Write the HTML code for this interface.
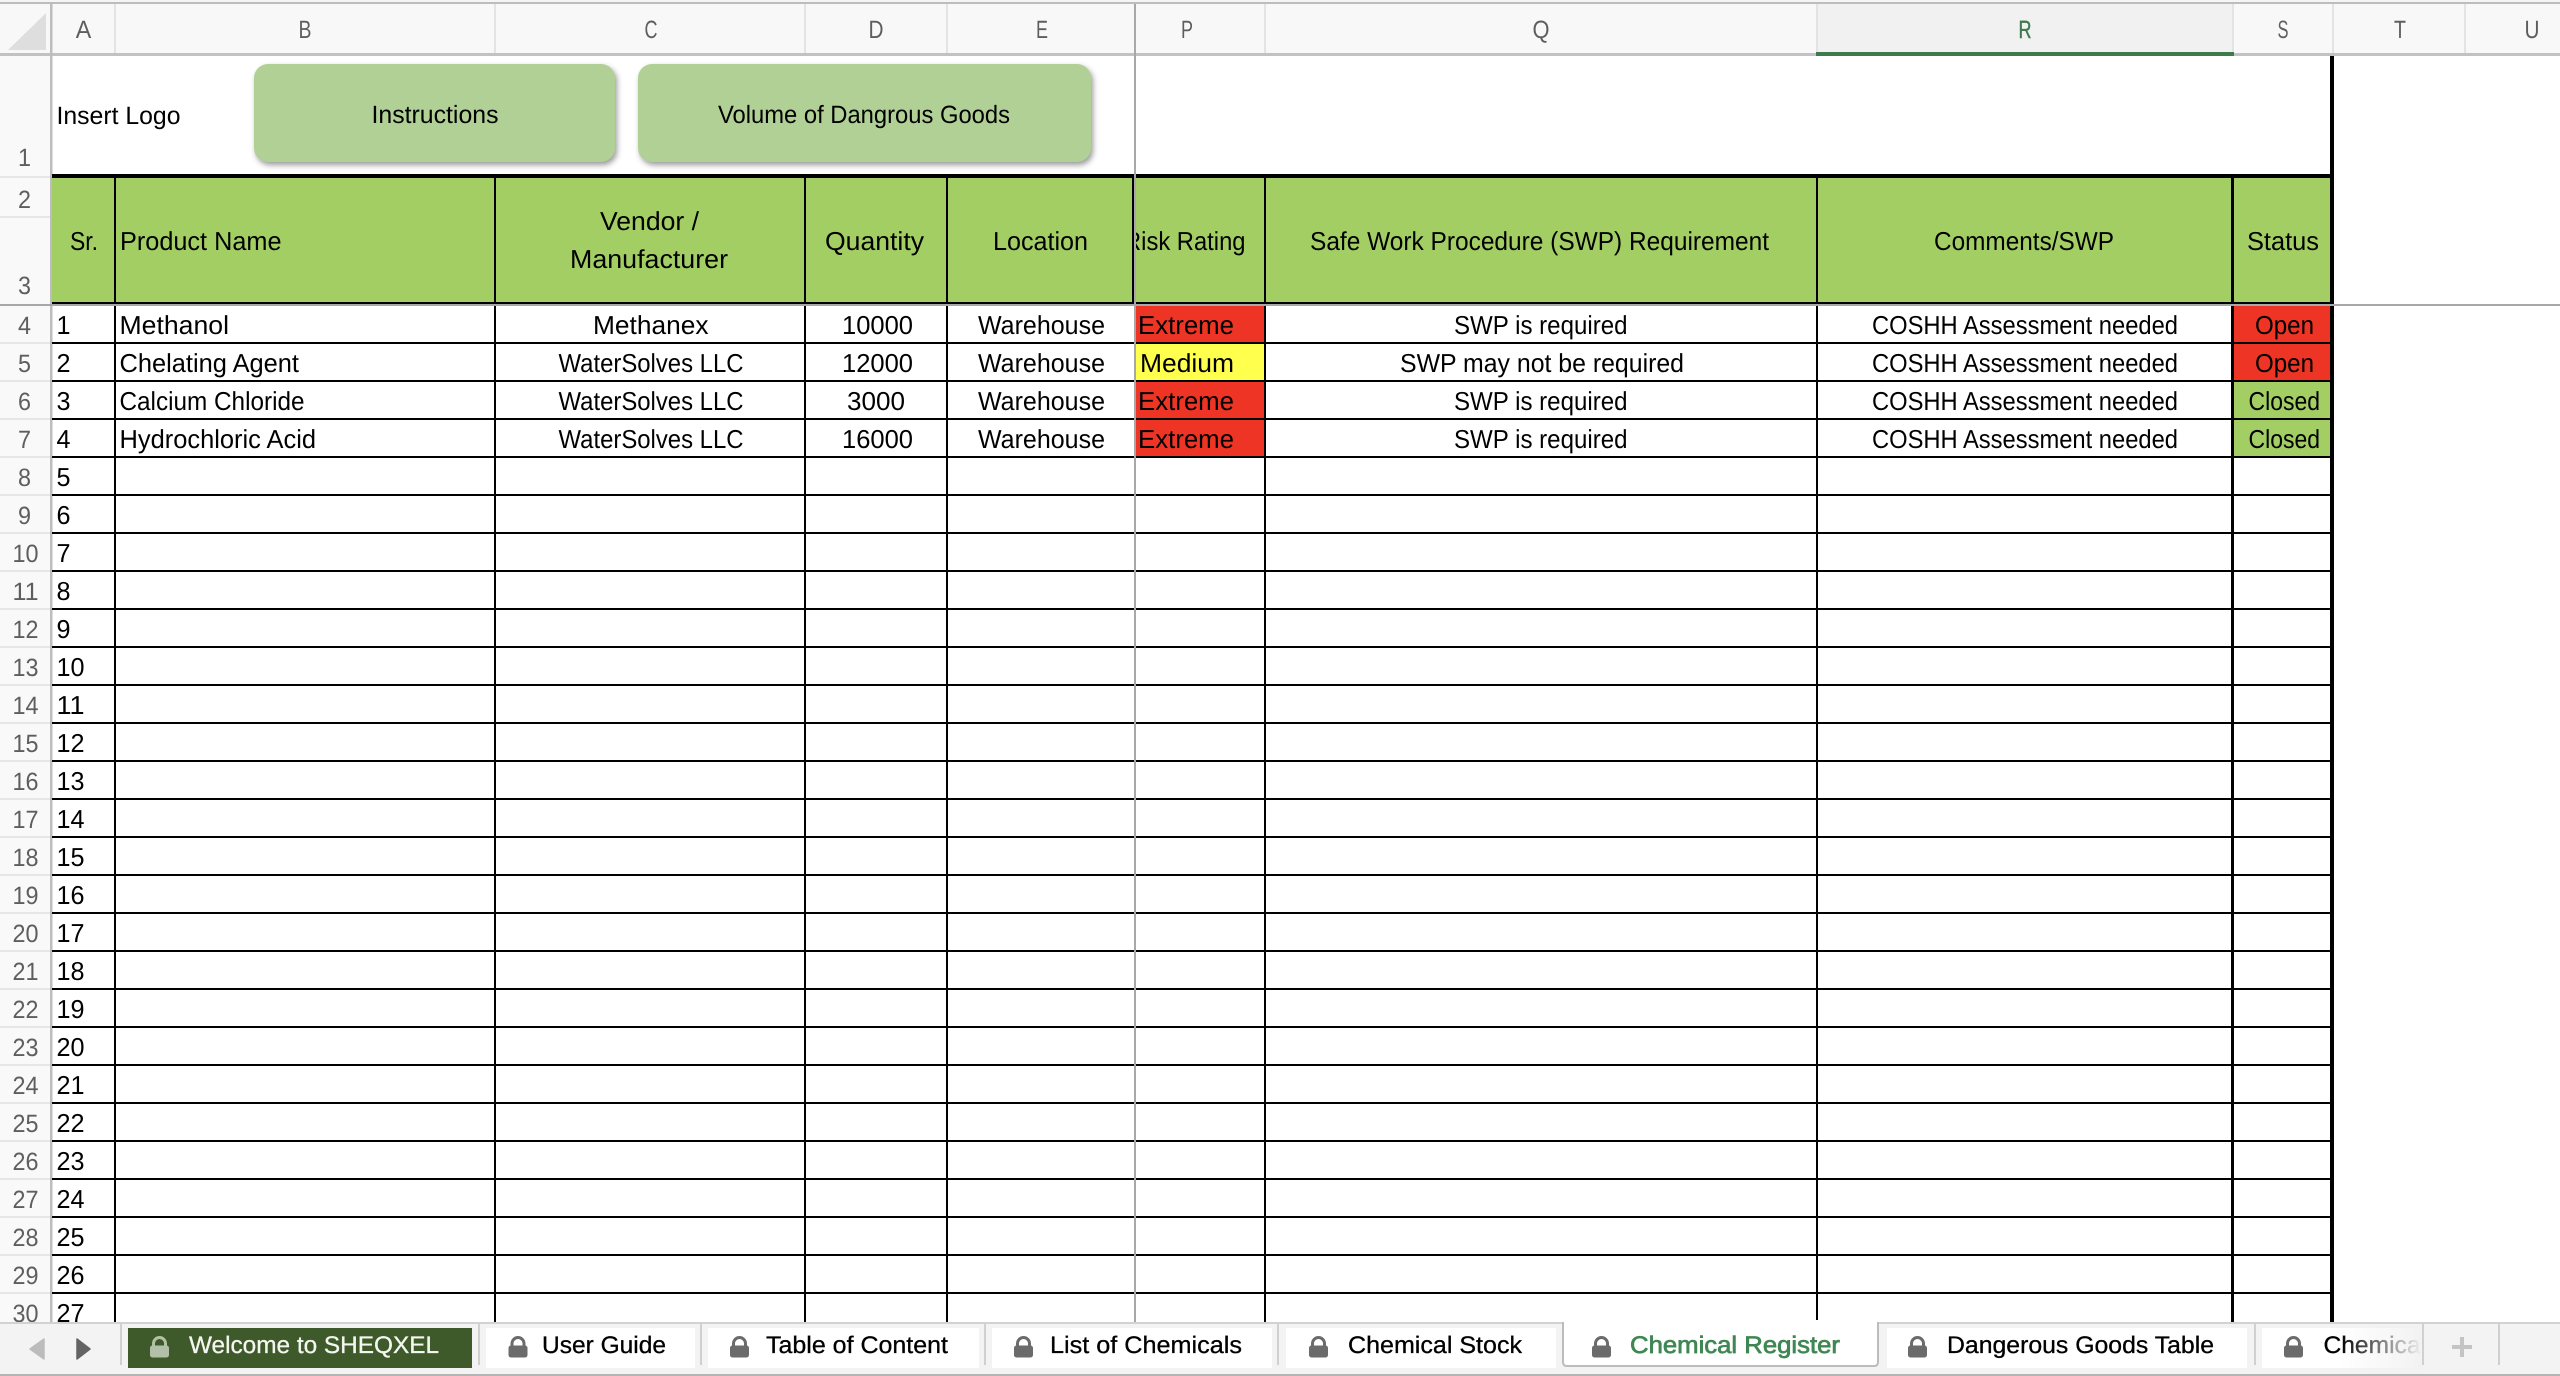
<!DOCTYPE html>
<html lang="en"><head><meta charset="utf-8"><title>Chemical Register</title>
<style>
html,body{margin:0;padding:0;background:#fff;width:2560px;height:1376px;overflow:hidden}
svg{display:block}
text{font-family:"Liberation Sans",sans-serif;text-rendering:geometricPrecision}
.c{font-size:26px;fill:#000}
.b{font-size:25px;fill:#000}
.h{font-size:25px;fill:#5e5e5e;text-anchor:middle}
.r{font-size:25px;fill:#5e5e5e}
.t{font-size:24px;fill:#000;stroke:#000;stroke-width:.3px}
</style></head><body>
<svg xmlns="http://www.w3.org/2000/svg" width="2560" height="1376" viewBox="0 0 2560 1376">
<defs>
<symbol id="lock" viewBox="0 0 19 21" overflow="visible"><path d="M3.5 10V7a6 6 0 0 1 12 0v3" fill="none" stroke="currentColor" stroke-width="3"/><rect x="0" y="9" width="19" height="12" rx="2.5" fill="currentColor"/></symbol>
<linearGradient id="fade" x1="0" x2="1" y1="0" y2="0"><stop offset="0" stop-color="#f2f2f2" stop-opacity="0"/><stop offset="1" stop-color="#f2f2f2" stop-opacity="1"/></linearGradient>
<clipPath id="pclip"><rect x="1136" y="178" width="129" height="124"/></clipPath>
</defs>
<rect width="2560" height="1376" fill="#fff"/>
<!-- column header -->
<rect x="0" y="0" width="2560" height="2" fill="#f5f5f5"/>
<rect x="0" y="4" width="2560" height="50" fill="#f8f8f8"/>
<rect x="0" y="2" width="2560" height="2" fill="#bdbdbd"/>
<rect x="1816" y="4" width="418" height="50" fill="#f1f1f1"/>
<rect x="0" y="53" width="2560" height="3" fill="#c2c2c2"/>
<path d="M115 4V53M495 4V53M805 4V53M947 4V53M1265 4V53M1817 4V53M2233 4V53M2333 4V53M2465 4V53" stroke="#e3e3e3" stroke-width="2"/>
<rect x="1816" y="52" width="418" height="4" fill="#3e7a4e"/>
<path d="M46 13V50H8Z" fill="#dedede"/>
<text class="h" x="83.5" y="38" textLength="15.5" lengthAdjust="spacingAndGlyphs">A</text>
<text class="h" x="305" y="38" textLength="13" lengthAdjust="spacingAndGlyphs">B</text>
<text class="h" x="651" y="38" textLength="13" lengthAdjust="spacingAndGlyphs">C</text>
<text class="h" x="876" y="38" textLength="15" lengthAdjust="spacingAndGlyphs">D</text>
<text class="h" x="1042" y="38" textLength="12" lengthAdjust="spacingAndGlyphs">E</text>
<text class="h" x="1187" y="38" textLength="12" lengthAdjust="spacingAndGlyphs">P</text>
<text class="h" x="1541" y="38" textLength="17" lengthAdjust="spacingAndGlyphs">Q</text>
<text class="h" x="2025" y="38" textLength="13" lengthAdjust="spacingAndGlyphs" style="fill:#3e7a4e;stroke:#3e7a4e;stroke-width:.4px">R</text>
<text class="h" x="2283" y="38" textLength="11" lengthAdjust="spacingAndGlyphs">S</text>
<text class="h" x="2400" y="38" textLength="12" lengthAdjust="spacingAndGlyphs">T</text>
<text class="h" x="2532" y="38" textLength="15" lengthAdjust="spacingAndGlyphs">U</text>
<!-- row header -->
<rect x="0" y="56" width="50" height="1266" fill="#f9f9f9"/>
<path d="M0 177H50M0 217H50M0 343H50M0 381H50M0 419H50M0 457H50M0 495H50M0 533H50M0 571H50M0 609H50M0 647H50M0 685H50M0 723H50M0 761H50M0 799H50M0 837H50M0 875H50M0 913H50M0 951H50M0 989H50M0 1027H50M0 1065H50M0 1103H50M0 1141H50M0 1179H50M0 1217H50M0 1255H50M0 1293H50" stroke="#e6e6e6" stroke-width="2"/>
<rect x="50" y="4" width="2.5" height="1318" fill="#bdbdbd"/>
<!-- row labels -->
<g class="r">
<text class="r" x="18" y="166" textLength="13" lengthAdjust="spacingAndGlyphs">1</text>
<text class="r" x="18" y="208" textLength="13" lengthAdjust="spacingAndGlyphs">2</text>
<text class="r" x="18" y="294" textLength="13" lengthAdjust="spacingAndGlyphs">3</text>
<text class="r" x="18" y="334" textLength="13" lengthAdjust="spacingAndGlyphs">4</text>
<text class="r" x="18" y="372" textLength="13" lengthAdjust="spacingAndGlyphs">5</text>
<text class="r" x="18" y="410" textLength="13" lengthAdjust="spacingAndGlyphs">6</text>
<text class="r" x="18" y="448" textLength="13" lengthAdjust="spacingAndGlyphs">7</text>
<text class="r" x="18" y="486" textLength="13" lengthAdjust="spacingAndGlyphs">8</text>
<text class="r" x="18" y="524" textLength="13" lengthAdjust="spacingAndGlyphs">9</text>
<text class="r" x="12.5" y="562" textLength="26" lengthAdjust="spacingAndGlyphs">10</text>
<text class="r" x="12.5" y="600" textLength="26" lengthAdjust="spacingAndGlyphs">11</text>
<text class="r" x="12.5" y="638" textLength="26" lengthAdjust="spacingAndGlyphs">12</text>
<text class="r" x="12.5" y="676" textLength="26" lengthAdjust="spacingAndGlyphs">13</text>
<text class="r" x="12.5" y="714" textLength="26" lengthAdjust="spacingAndGlyphs">14</text>
<text class="r" x="12.5" y="752" textLength="26" lengthAdjust="spacingAndGlyphs">15</text>
<text class="r" x="12.5" y="790" textLength="26" lengthAdjust="spacingAndGlyphs">16</text>
<text class="r" x="12.5" y="828" textLength="26" lengthAdjust="spacingAndGlyphs">17</text>
<text class="r" x="12.5" y="866" textLength="26" lengthAdjust="spacingAndGlyphs">18</text>
<text class="r" x="12.5" y="904" textLength="26" lengthAdjust="spacingAndGlyphs">19</text>
<text class="r" x="12.5" y="942" textLength="26" lengthAdjust="spacingAndGlyphs">20</text>
<text class="r" x="12.5" y="980" textLength="26" lengthAdjust="spacingAndGlyphs">21</text>
<text class="r" x="12.5" y="1018" textLength="26" lengthAdjust="spacingAndGlyphs">22</text>
<text class="r" x="12.5" y="1056" textLength="26" lengthAdjust="spacingAndGlyphs">23</text>
<text class="r" x="12.5" y="1094" textLength="26" lengthAdjust="spacingAndGlyphs">24</text>
<text class="r" x="12.5" y="1132" textLength="26" lengthAdjust="spacingAndGlyphs">25</text>
<text class="r" x="12.5" y="1170" textLength="26" lengthAdjust="spacingAndGlyphs">26</text>
<text class="r" x="12.5" y="1208" textLength="26" lengthAdjust="spacingAndGlyphs">27</text>
<text class="r" x="12.5" y="1246" textLength="26" lengthAdjust="spacingAndGlyphs">28</text>
<text class="r" x="12.5" y="1284" textLength="26" lengthAdjust="spacingAndGlyphs">29</text>
<text class="r" x="12.5" y="1322" textLength="26" lengthAdjust="spacingAndGlyphs">30</text>
</g>
<!-- row 1 -->
<text class="b" x="56.5" y="124" textLength="124" lengthAdjust="spacingAndGlyphs">Insert Logo</text>
<rect x="254" y="64" width="361" height="98" rx="14" fill="#b1d095" style="filter:drop-shadow(2px 3px 3px rgba(0,0,0,.4))"/>
<rect x="638" y="64" width="453" height="98" rx="14" fill="#b1d095" style="filter:drop-shadow(2px 3px 3px rgba(0,0,0,.4))"/>
<text class="b" x="371.5" y="123" textLength="127" lengthAdjust="spacingAndGlyphs">Instructions</text>
<text class="b" x="718" y="123" textLength="292" lengthAdjust="spacingAndGlyphs">Volume of Dangrous Goods</text>
<!-- green header -->
<rect x="52" y="178" width="2278" height="124" fill="#a2ce64"/>
<rect x="52" y="174" width="2282" height="4" fill="#000"/>
<!-- coloured cells -->
<rect x="1136" y="306" width="129" height="36" fill="#ee3424"/>
<rect x="1136" y="344" width="129" height="36" fill="#ffff4d"/>
<rect x="1136" y="382" width="129" height="36" fill="#ee3424"/>
<rect x="1136" y="420" width="129" height="36" fill="#ee3424"/>
<rect x="2233" y="306" width="97" height="36" fill="#ee3424"/>
<rect x="2233" y="344" width="97" height="36" fill="#ee3424"/>
<rect x="2233" y="382" width="97" height="36" fill="#a2ce64"/>
<rect x="2233" y="420" width="97" height="36" fill="#a2ce64"/>
<!-- grid -->
<path d="M52 303H2330M52 343H2330M52 381H2330M52 419H2330M52 457H2330M52 495H2330M52 533H2330M52 571H2330M52 609H2330M52 647H2330M52 685H2330M52 723H2330M52 761H2330M52 799H2330M52 837H2330M52 875H2330M52 913H2330M52 951H2330M52 989H2330M52 1027H2330M52 1065H2330M52 1103H2330M52 1141H2330M52 1179H2330M52 1217H2330M52 1255H2330M52 1293H2330" stroke="#000" stroke-width="2"/>
<path d="M115 178V1322M495 178V1322M805 178V1322M947 178V1322M1133 178V302M1265 178V1322M1817 178V1322" stroke="#000" stroke-width="2"/>
<rect x="2231" y="178" width="3" height="1144" fill="#000"/>
<rect x="2330" y="56" width="4" height="1266" fill="#000"/>
<rect x="0" y="304" width="2560" height="2" fill="#a8a8a8"/>
<rect x="1134" y="4" width="2" height="1318" fill="#a8a8a8"/>
<!-- header text -->
<text class="c" x="70" y="250" textLength="28" lengthAdjust="spacingAndGlyphs">Sr.</text>
<text class="c" x="120" y="250" textLength="161.5" lengthAdjust="spacingAndGlyphs">Product Name</text>
<text class="c" x="600" y="230" textLength="99" lengthAdjust="spacingAndGlyphs">Vendor /</text>
<text class="c" x="570" y="268" textLength="158" lengthAdjust="spacingAndGlyphs">Manufacturer</text>
<text class="c" x="825" y="250" textLength="99" lengthAdjust="spacingAndGlyphs">Quantity</text>
<text class="c" x="993" y="250" textLength="95" lengthAdjust="spacingAndGlyphs">Location</text>
<g clip-path="url(#pclip)"><text class="c" x="1124" y="250" textLength="121.5" lengthAdjust="spacingAndGlyphs">Risk Rating</text></g>
<text class="c" x="1310" y="250" textLength="459" lengthAdjust="spacingAndGlyphs">Safe Work Procedure (SWP) Requirement</text>
<text class="c" x="1934" y="250" textLength="180" lengthAdjust="spacingAndGlyphs">Comments/SWP</text>
<text class="c" x="2247" y="250" textLength="72" lengthAdjust="spacingAndGlyphs">Status</text>
<!-- row 4 -->
<text class="c" x="119.5" y="334" textLength="109.5" lengthAdjust="spacingAndGlyphs">Methanol</text>
<text class="c" x="593" y="334" textLength="115.5" lengthAdjust="spacingAndGlyphs">Methanex</text>
<text class="c" x="842" y="334" textLength="71" lengthAdjust="spacingAndGlyphs">10000</text>
<text class="c" x="978" y="334" textLength="127" lengthAdjust="spacingAndGlyphs">Warehouse</text>
<text class="c" x="1138" y="334" textLength="96" lengthAdjust="spacingAndGlyphs">Extreme</text>
<text class="c" x="1454" y="334" textLength="173.5" lengthAdjust="spacingAndGlyphs">SWP is required</text>
<text class="c" x="1872" y="334" textLength="306" lengthAdjust="spacingAndGlyphs">COSHH Assessment needed</text>
<text class="c" x="2255" y="334" textLength="59" lengthAdjust="spacingAndGlyphs">Open</text>
<!-- row 5 -->
<text class="c" x="119.5" y="372" textLength="179.5" lengthAdjust="spacingAndGlyphs">Chelating Agent</text>
<text class="c" x="558.5" y="372" textLength="185" lengthAdjust="spacingAndGlyphs">WaterSolves LLC</text>
<text class="c" x="842" y="372" textLength="71" lengthAdjust="spacingAndGlyphs">12000</text>
<text class="c" x="978" y="372" textLength="127" lengthAdjust="spacingAndGlyphs">Warehouse</text>
<text class="c" x="1140" y="372" textLength="94" lengthAdjust="spacingAndGlyphs">Medium</text>
<text class="c" x="1400" y="372" textLength="284" lengthAdjust="spacingAndGlyphs">SWP may not be required</text>
<text class="c" x="1872" y="372" textLength="306" lengthAdjust="spacingAndGlyphs">COSHH Assessment needed</text>
<text class="c" x="2255" y="372" textLength="59" lengthAdjust="spacingAndGlyphs">Open</text>
<!-- row 6 -->
<text class="c" x="119.5" y="410" textLength="185" lengthAdjust="spacingAndGlyphs">Calcium Chloride</text>
<text class="c" x="558.5" y="410" textLength="185" lengthAdjust="spacingAndGlyphs">WaterSolves LLC</text>
<text class="c" x="847" y="410" textLength="58" lengthAdjust="spacingAndGlyphs">3000</text>
<text class="c" x="978" y="410" textLength="127" lengthAdjust="spacingAndGlyphs">Warehouse</text>
<text class="c" x="1138" y="410" textLength="96" lengthAdjust="spacingAndGlyphs">Extreme</text>
<text class="c" x="1454" y="410" textLength="173.5" lengthAdjust="spacingAndGlyphs">SWP is required</text>
<text class="c" x="1872" y="410" textLength="306" lengthAdjust="spacingAndGlyphs">COSHH Assessment needed</text>
<text class="c" x="2248.5" y="410" textLength="71.5" lengthAdjust="spacingAndGlyphs">Closed</text>
<!-- row 7 -->
<text class="c" x="119.5" y="448" textLength="196.5" lengthAdjust="spacingAndGlyphs">Hydrochloric Acid</text>
<text class="c" x="558.5" y="448" textLength="185" lengthAdjust="spacingAndGlyphs">WaterSolves LLC</text>
<text class="c" x="842" y="448" textLength="71" lengthAdjust="spacingAndGlyphs">16000</text>
<text class="c" x="978" y="448" textLength="127" lengthAdjust="spacingAndGlyphs">Warehouse</text>
<text class="c" x="1138" y="448" textLength="96" lengthAdjust="spacingAndGlyphs">Extreme</text>
<text class="c" x="1454" y="448" textLength="173.5" lengthAdjust="spacingAndGlyphs">SWP is required</text>
<text class="c" x="1872" y="448" textLength="306" lengthAdjust="spacingAndGlyphs">COSHH Assessment needed</text>
<text class="c" x="2248.5" y="448" textLength="71.5" lengthAdjust="spacingAndGlyphs">Closed</text>
<!-- Sr numbers -->
<text class="c" x="56.5" y="334" textLength="14" lengthAdjust="spacingAndGlyphs">1</text>
<text class="c" x="56.5" y="372" textLength="14" lengthAdjust="spacingAndGlyphs">2</text>
<text class="c" x="56.5" y="410" textLength="14" lengthAdjust="spacingAndGlyphs">3</text>
<text class="c" x="56.5" y="448" textLength="14" lengthAdjust="spacingAndGlyphs">4</text>
<text class="c" x="56.5" y="486" textLength="14" lengthAdjust="spacingAndGlyphs">5</text>
<text class="c" x="56.5" y="524" textLength="14" lengthAdjust="spacingAndGlyphs">6</text>
<text class="c" x="56.5" y="562" textLength="14" lengthAdjust="spacingAndGlyphs">7</text>
<text class="c" x="56.5" y="600" textLength="14" lengthAdjust="spacingAndGlyphs">8</text>
<text class="c" x="56.5" y="638" textLength="14" lengthAdjust="spacingAndGlyphs">9</text>
<text class="c" x="56.5" y="676" textLength="28" lengthAdjust="spacingAndGlyphs">10</text>
<text class="c" x="56.5" y="714" textLength="28" lengthAdjust="spacingAndGlyphs">11</text>
<text class="c" x="56.5" y="752" textLength="28" lengthAdjust="spacingAndGlyphs">12</text>
<text class="c" x="56.5" y="790" textLength="28" lengthAdjust="spacingAndGlyphs">13</text>
<text class="c" x="56.5" y="828" textLength="28" lengthAdjust="spacingAndGlyphs">14</text>
<text class="c" x="56.5" y="866" textLength="28" lengthAdjust="spacingAndGlyphs">15</text>
<text class="c" x="56.5" y="904" textLength="28" lengthAdjust="spacingAndGlyphs">16</text>
<text class="c" x="56.5" y="942" textLength="28" lengthAdjust="spacingAndGlyphs">17</text>
<text class="c" x="56.5" y="980" textLength="28" lengthAdjust="spacingAndGlyphs">18</text>
<text class="c" x="56.5" y="1018" textLength="28" lengthAdjust="spacingAndGlyphs">19</text>
<text class="c" x="56.5" y="1056" textLength="28" lengthAdjust="spacingAndGlyphs">20</text>
<text class="c" x="56.5" y="1094" textLength="28" lengthAdjust="spacingAndGlyphs">21</text>
<text class="c" x="56.5" y="1132" textLength="28" lengthAdjust="spacingAndGlyphs">22</text>
<text class="c" x="56.5" y="1170" textLength="28" lengthAdjust="spacingAndGlyphs">23</text>
<text class="c" x="56.5" y="1208" textLength="28" lengthAdjust="spacingAndGlyphs">24</text>
<text class="c" x="56.5" y="1246" textLength="28" lengthAdjust="spacingAndGlyphs">25</text>
<text class="c" x="56.5" y="1284" textLength="28" lengthAdjust="spacingAndGlyphs">26</text>
<text class="c" x="56.5" y="1322" textLength="28" lengthAdjust="spacingAndGlyphs">27</text>
<!-- sheet tab bar -->
<rect x="0" y="1322" width="2560" height="54" fill="#f3f3f3"/>
<rect x="0" y="1322" width="2560" height="2" fill="#d2d2d2"/>
<rect x="0" y="1374" width="2560" height="2" fill="#b4b4b4"/>
<path d="M44 1339V1359L30 1349Z" fill="#bcbcbc" stroke="#bcbcbc" stroke-width="1.5" stroke-linejoin="round"/>
<path d="M77 1339V1359L90 1349Z" fill="#636363" stroke="#636363" stroke-width="1.5" stroke-linejoin="round"/>
<path d="M121 1324V1365M479 1324V1365M701 1324V1365M985 1324V1365M1278 1324V1365M2255 1324V1365M2423 1324V1365M2499 1324V1365" stroke="#d0d0d0" stroke-width="2"/>
<rect x="128" y="1328" width="344" height="40" fill="#3f5a2a"/>
<rect x="486" y="1328" width="209" height="40" fill="#fff"/>
<rect x="708" y="1328" width="271" height="40" fill="#fff"/>
<rect x="992" y="1328" width="280" height="40" fill="#fff"/>
<rect x="1286" y="1328" width="270" height="40" fill="#fff"/>
<rect x="1887" y="1328" width="360" height="40" fill="#fff"/>
<rect x="2262" y="1328" width="158" height="40" fill="#fff"/>
<path d="M1563 1320V1362q0 4 4 4H1874q4 0 4-4V1320Z" fill="#fff"/>
<path d="M1563 1322V1362q0 4 4 4H1874q4 0 4-4V1322" fill="none" stroke="#bcbcbc" stroke-width="2"/>
<use href="#lock" x="150" y="1336.5" width="19" height="21" style="color:#b1c0a7"/>
<use href="#lock" x="508.5" y="1336.5" width="19" height="21" style="color:#6b6b6b"/>
<use href="#lock" x="730" y="1336.5" width="19" height="21" style="color:#6b6b6b"/>
<use href="#lock" x="1014" y="1336.5" width="19" height="21" style="color:#6b6b6b"/>
<use href="#lock" x="1309" y="1336.5" width="19" height="21" style="color:#6b6b6b"/>
<use href="#lock" x="1592" y="1336.5" width="19" height="21" style="color:#6b6b6b"/>
<use href="#lock" x="1908" y="1336.5" width="19" height="21" style="color:#6b6b6b"/>
<use href="#lock" x="2284" y="1336.5" width="19" height="21" style="color:#6b6b6b"/>
<text class="t" x="189" y="1353" textLength="250" lengthAdjust="spacingAndGlyphs" style="fill:#f4f6f0;stroke:#f4f6f0">Welcome to SHEQXEL</text>
<text class="t" x="542" y="1353" textLength="124" lengthAdjust="spacingAndGlyphs">User Guide</text>
<text class="t" x="766" y="1353" textLength="182" lengthAdjust="spacingAndGlyphs">Table of Content</text>
<text class="t" x="1050" y="1353" textLength="192" lengthAdjust="spacingAndGlyphs">List of Chemicals</text>
<text class="t" x="1348" y="1353" textLength="174" lengthAdjust="spacingAndGlyphs">Chemical Stock</text>
<text class="t" x="1630" y="1353" textLength="210" lengthAdjust="spacingAndGlyphs" style="fill:#3f8753;stroke:#3f8753;stroke-width:.7px">Chemical Register</text>
<text class="t" x="1947" y="1353" textLength="267" lengthAdjust="spacingAndGlyphs">Dangerous Goods Table</text>
<text class="t" x="2323.5" y="1353" textLength="97" lengthAdjust="spacingAndGlyphs">Chemica</text>
<rect x="2340" y="1325" width="82" height="48" fill="url(#fade)"/>
<path d="M2462 1337V1357M2452 1347H2472" stroke="#c4c4c4" stroke-width="4"/>
</svg>
</body></html>
